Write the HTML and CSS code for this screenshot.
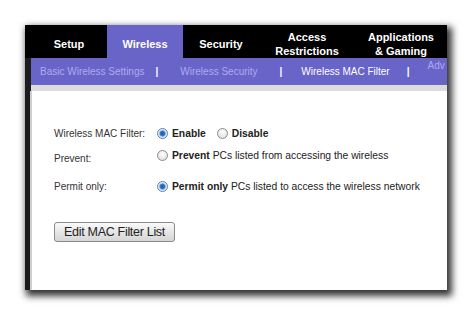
FILE: index.html
```html
<!DOCTYPE html>
<html>
<head>
<meta charset="utf-8">
<link rel="stylesheet" href="styles.css">
</head>
<body>
<div class="shot">
  <div class="window">
    <div class="tabs">
      <div class="tab t1">Setup</div>
      <div class="tab t1 active">Wireless</div>
      <div class="tab t1">Security</div>
      <div class="tab t2">Access<br>Restrictions</div>
      <div class="tab t3">Applications<br>&amp; Gaming</div>
    </div>
    <div class="subnav">
      <span class="sub">Basic Wireless Settings</span>
      <span class="sep s1">|</span>
      <span class="sub">Wireless Security</span>
      <span class="sep s2">|</span>
      <span class="sub current">Wireless MAC Filter</span>
      <span class="sep s3">|</span>
      <span class="sub adv">Adv</span>
    </div>
    <div class="stripe"></div>
    <div class="content">
      <div class="row r1">
        <div class="label">Wireless MAC Filter:</div>
        <div class="opts">
          <span class="radio on"></span><b class="opt">Enable</b>
          <span class="radio gap"></span><b class="opt">Disable</b>
        </div>
      </div>
      <div class="row r2">
        <div class="label low">Prevent:</div>
        <div class="opts">
          <span class="radio"></span><span class="opt"><b>Prevent</b> PCs listed from accessing the wireless</span>
        </div>
      </div>
      <div class="row r3">
        <div class="label">Permit only:</div>
        <div class="opts">
          <span class="radio on"></span><span class="opt"><b>Permit only</b> PCs listed to access the wireless network</span>
        </div>
      </div>
      <div class="btnrow"><button class="btn">Edit MAC Filter List</button></div>
    </div>
  </div>
</div>
</body>
</html>
```

FILE: styles.css
```css
html, body { margin: 0; padding: 0; background: #fff; }
body { width: 474px; height: 316px; overflow: hidden; font-family: "Liberation Sans", Arial, sans-serif; }
.shot { padding: 25px 0 0 25px; }
.window {
  width: 422px; height: 265px;
  background: #1c1c1c;
  display: flex; flex-direction: column;
  box-shadow: 3px 4px 7px 2px rgba(0,0,0,0.8);
  overflow: hidden;
}
.tabs { height: 33px; background: #000; display: flex; padding-left: 6px; flex-shrink: 0; }
.tab {
  color: #fff; font-weight: bold; font-size: 11px; line-height: 14px;
  display: flex; align-items: center; justify-content: center; text-align: center;
  padding-top: 4px; box-sizing: border-box;
}
.t1 { width: 76px; }
.t2 { width: 96px; }
.t3 { flex: 1; }
.tab.active { background: #6964c8; }
.subnav {
  margin-left: 6px; height: 27px; background: #6964c8; flex-shrink: 0;
  display: flex; align-items: center; font-size: 10px; white-space: nowrap; overflow: hidden;
  padding-left: 9px;
}
.sub { color: #aeaaf0; }
.sub.current { color: #fff; }
.sep { color: #fff; font-weight: bold; }
.s1 { margin: 0 22px 0 11px; }
.s2 { margin: 0 19px 0 22px; }
.s3 { margin: 0 18px 0 17px; }
.adv { position: relative; top: -6px; }
.stripe { margin-left: 6px; height: 6px; background: #dcdcdc; flex-shrink: 0; }
.content {
  flex: 1; margin-left: 5px; border-left: 2px solid #cfcfcf; background: #fff;
  padding: 35px 0 0 22px; color: #333; font-size: 10px;
}
.row { display: flex; align-items: center; }
.label { width: 103px; }
.label.low { position: relative; top: 3px; }
.r1 { height: 14px; }
.r2 { height: 14px; margin-top: 8px; }
.r3 { height: 14px; margin-top: 17px; }
.opts { display: flex; align-items: center; white-space: nowrap; }
.opt { font-size: 10.3px; color: #222; }
.radio {
  width: 9px; height: 9px; border-radius: 50%;
  border: 1px solid #8c8c8c;
  background: radial-gradient(circle at 50% 35%, #fff, #d8d8d8);
  margin-right: 4px; box-sizing: content-box;
}
.radio.on { background: radial-gradient(circle, #1c4f9c 0, #3a7fd0 2.5px, #cfe0f5 3.5px, #fff 5px); border-color: #5b7fae; }
.radio.gap { margin-left: 11px; }
.btnrow { margin-top: 29px; }
.btn {
  font-family: "Liberation Sans", Arial, sans-serif; font-size: 12.5px; letter-spacing: -0.3px; color: #222;
  width: 121px; height: 20px; padding: 0;
  border: 1px solid #8a8a8a; border-radius: 3px;
  background: linear-gradient(#fafafa, #e4e4e4 55%, #d6d6d6);
}
```
